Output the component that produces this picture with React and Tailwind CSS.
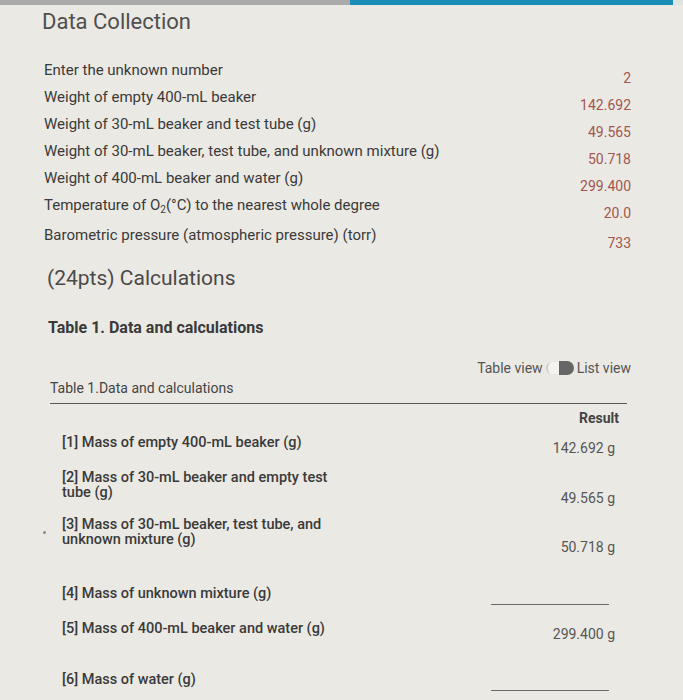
import React from 'react';

const dataRows = [
  { label: 'Enter the unknown number', value: '2' },
  { label: 'Weight of empty 400-mL beaker', value: '142.692' },
  { label: 'Weight of 30-mL beaker and test tube (g)', value: '49.565' },
  { label: 'Weight of 30-mL beaker, test tube, and unknown mixture (g)', value: '50.718' },
  { label: 'Weight of 400-mL beaker and water (g)', value: '299.400' },
  { label: 'Temperature of O2', sub: true, value: '20.0' },
  { label: 'Barometric pressure (atmospheric pressure) (torr)', value: '733' },
];

const calcRows = [
  { label: '[1] Mass of empty 400-mL beaker (g)', value: '142.692 g', h: 'h-[35px]', vt: 'mt-[5px]' },
  { label: '[2] Mass of 30-mL beaker and empty test tube (g)', value: '49.565 g', h: 'h-[47px]', vt: 'mt-[20px]' },
  { label: '[3] Mass of 30-mL beaker, test tube, and unknown mixture (g)', value: '50.718 g', h: 'h-[69px]', vt: 'mt-[22px]', dot: true },
  { label: '[4] Mass of unknown mixture (g)', blank: true, h: 'h-[35px]', vt: 'mt-[18px]' },
  { label: '[5] Mass of 400-mL beaker and water (g)', value: '299.400 g', h: 'h-[51px]', vt: 'mt-[5px]' },
  { label: '[6] Mass of water (g)', blank: true, h: 'h-[29px]', vt: 'mt-[18px]' },
];

function Toggle() {
  return (
    <span className="relative inline-flex items-center w-[28px] h-[16px] mx-[3px]">
      <span className="absolute left-0 right-[2px] top-[2px] h-[12px] rounded-full bg-[#f4f3f0] border-l-2 border-[#cfcdc8]" />
      <span className="absolute right-0 top-[1px] w-[15px] h-[14px] rounded-r-full rounded-l-[3px] bg-[#666]" />
    </span>
  );
}

export default function App() {
  return (
    <div className="w-[683px] h-[700px] overflow-hidden bg-[#ebe9e4] text-[#333]" style={{ fontFamily: 'Roboto, "Liberation Sans", sans-serif' }}>
      <div className="flex h-[5px]">
        <div className="w-[350px] bg-[#a9aaa9]" />
        <div className="flex-1 bg-[#1b8db6]" />
        <div className="w-[10px] bg-[#dfe3e3]" />
      </div>

      <div className="pl-[42px] pr-[52px]">
        <h1 className="pt-[3px] text-[22px] leading-[28px] text-[#4f4f4f]">Data Collection</h1>

        <div className="mt-[21px] pl-[2px]">
          {dataRows.map((r) => (
            <div key={r.value} className="flex justify-between h-[27px] last:h-[30px] last:pt-[3px]">
              <span className="text-[15px] leading-[27px] text-[#3a3a3a]">
                {r.sub ? (
                  <>Temperature of O<sub className="text-[10px]">2</sub>(°C) to the nearest whole degree</>
                ) : r.label}
              </span>
              <span className="mt-[8px] text-[14px] leading-[27px] text-[#a1574f]">{r.value}</span>
            </div>
          ))}
        </div>

        <h2 className="mt-[15px] pl-[5px] text-[21px] leading-[28px] text-[#4a4a4a]">(24pts) Calculations</h2>

        <h3 className="mt-[25px] pl-[6px] text-[16px] leading-[22px] font-bold text-[#3a3a3a]">Table 1. Data and calculations</h3>

        <div className="mt-[19px] flex justify-end items-center text-[14px] leading-[20px] text-[#555]">
          <span>Table view</span>
          <Toggle />
          <span>List view</span>
        </div>

        <div className="ml-[8px] mr-[4px]">
          <div className="pb-[5px] border-b border-[#5a5a5a] text-[14px] leading-[20px] text-[#444]">Table 1.Data and calculations</div>

          <div className="pt-[4px] flex justify-end pr-[8px] text-[14px] leading-[20px] font-bold text-[#444]">Result</div>

          <div className="mt-[7px]">
            {calcRows.map((r) => (
              <div key={r.label} className={`relative flex justify-between ${r.h}`}>
                {r.dot && <span className="absolute left-[-7px] top-[14px] w-[3px] h-[3px] rounded-full bg-[#8a8a8a]" />}
                <span className="pl-[12px] w-[292px] text-[14.5px] leading-[15px] font-medium text-[#3a3a3a]">{r.label}</span>
                {r.blank ? (
                  <span className={`${r.vt} mr-[18px] w-[118px] h-0 border-b border-[#6a6a6a]`} />
                ) : (
                  <span className={`${r.vt} pr-[12px] text-[14px] leading-[16px] text-[#555]`}>{r.value}</span>
                )}
              </div>
            ))}
          </div>
        </div>
      </div>
    </div>
  );
}
